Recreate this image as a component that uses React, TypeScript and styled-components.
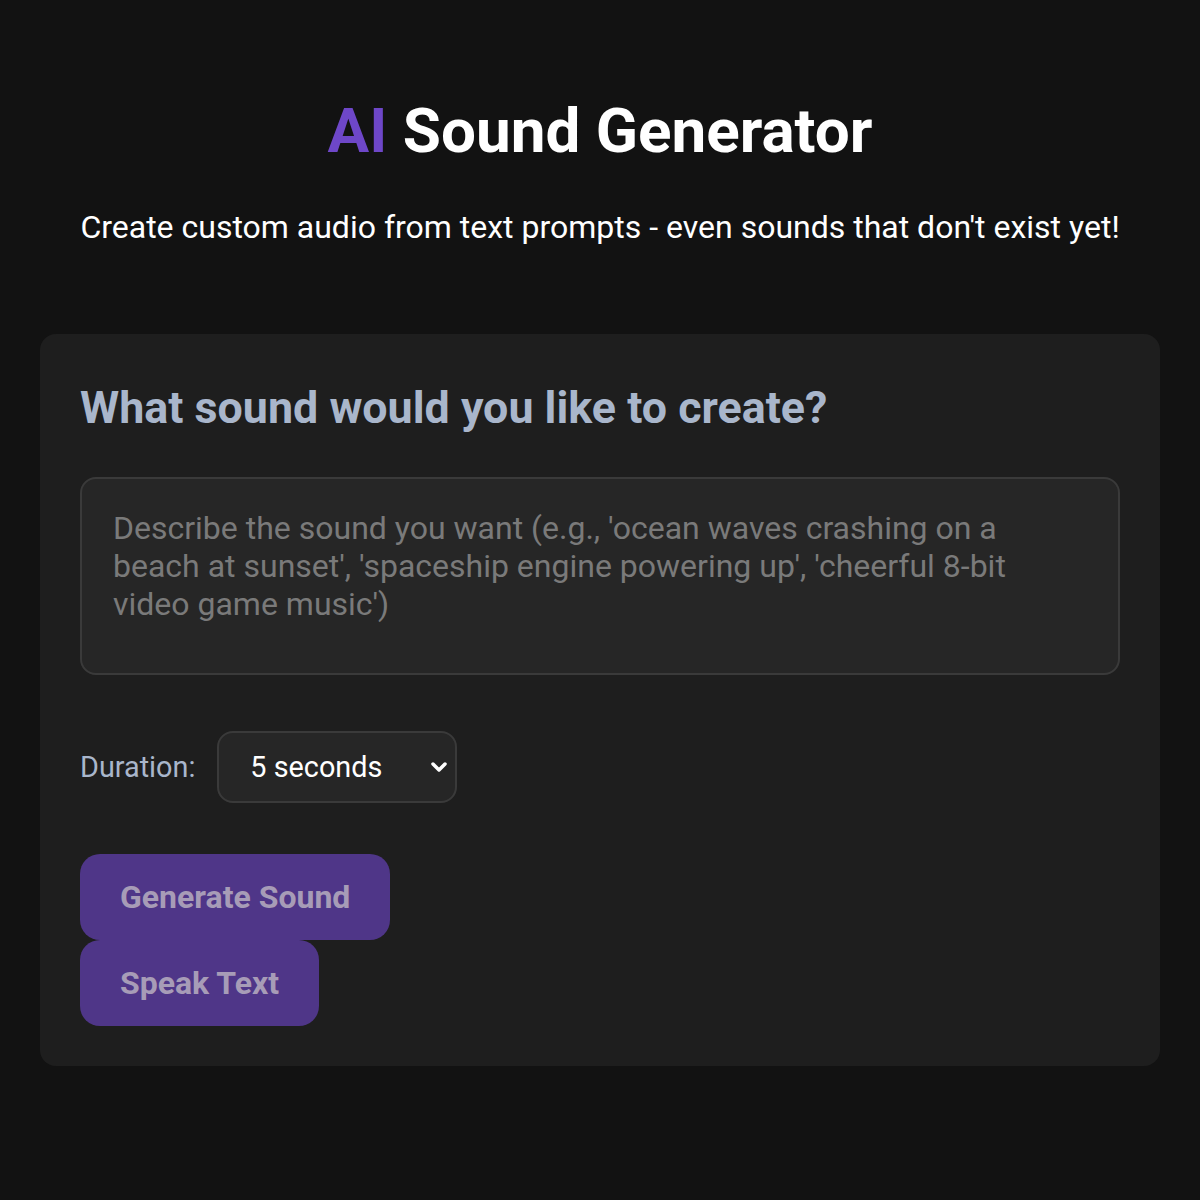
import {FC} from 'react'
import styled, {createGlobalStyle} from 'styled-components'

const GlobalStyle = createGlobalStyle`
  html, body {
    margin: 0;
    padding: 0;
    background: #121212;
    color: #ffffff;
    font-family: Roboto, 'Liberation Sans', Arial, sans-serif;
  }
`

const Page = styled.div`
  min-height: 1200px;
  padding: 0 40px;
  box-sizing: border-box;
`

const Header = styled.header`
  display: flex;
  flex-direction: column;
  align-items: center;
  padding-top: 96px;
`

const Title = styled.h1`
  margin: 0;
  font-size: 62px;
  line-height: 70px;
  font-weight: 700;
  color: #ffffff;
`

const Accent = styled.span`
  color: #6e47c8;
`

const Subtitle = styled.p`
  margin: 39px 0 0;
  font-size: 32px;
  line-height: 44px;
  color: #ffffff;
`

const Card = styled.section`
  margin-top: 85px;
  background: #1e1e1e;
  border-radius: 16px;
  padding: 40px;
  display: flex;
  flex-direction: column;
`

const CardTitle = styled.h2`
  margin: 7px 0 0;
  font-size: 44.8px;
  line-height: 54px;
  font-weight: 700;
  color: #a9b6cb;
`

const Prompt = styled.textarea`
  margin-top: 42px;
  height: 198px;
  box-sizing: border-box;
  padding: 30px 31px;
  background: #262626;
  border: 2px solid #3a3a3a;
  border-radius: 16px;
  color: #ffffff;
  font-family: inherit;
  font-size: 32px;
  line-height: 38px;
  resize: none;
  outline: none;

  &::placeholder {
    color: #7a7a7a;
  }
`

const Row = styled.div`
  display: flex;
  align-items: center;
  gap: 22px;
  margin-top: 56px;
`

const Label = styled.label`
  font-size: 28.8px;
  color: #a9b6cb;
`

const SelectWrap = styled.div`
  position: relative;
  display: flex;
`

const Select = styled.select`
  appearance: none;
  width: 240px;
  height: 72px;
  padding: 0 31px;
  background: #262626;
  border: 2px solid #3a3a3a;
  border-radius: 16px;
  color: #ffffff;
  font-family: inherit;
  font-size: 28.8px;
  outline: none;
`

const Chevron = styled.svg`
  position: absolute;
  right: 8px;
  top: 50%;
  transform: translateY(-50%);
  pointer-events: none;
`

const Actions = styled.div`
  display: flex;
  flex-direction: column;
  align-items: flex-start;
  margin-top: 51px;
`

const Button = styled.button`
  height: 86px;
  padding: 0 40px;
  border: none;
  border-radius: 20px;
  background: #4f3688;
  color: #a79cb7;
  font-family: inherit;
  font-size: 32px;
  font-weight: 700;
  cursor: not-allowed;
`

const App: FC = () => (
  <>
    <GlobalStyle />
    <Page>
      <Header>
        <Title>
          <Accent>AI</Accent> Sound Generator
        </Title>
        <Subtitle>
          Create custom audio from text prompts - even sounds that don't exist yet!
        </Subtitle>
      </Header>
      <Card>
        <CardTitle>What sound would you like to create?</CardTitle>
        <Prompt placeholder="Describe the sound you want (e.g., 'ocean waves crashing on a beach at sunset', 'spaceship engine powering up', 'cheerful 8-bit video game music')" />
        <Row>
          <Label htmlFor="duration">Duration:</Label>
          <SelectWrap>
            <Select id="duration" defaultValue="5">
              <option value="3">3 seconds</option>
              <option value="5">5 seconds</option>
              <option value="10">10 seconds</option>
            </Select>
            <Chevron width="20" height="14" viewBox="0 0 20 14">
              <path d="M4 4 L10 10 L16 4" fill="none" stroke="#ffffff" strokeWidth="3.5" strokeLinecap="round" strokeLinejoin="round" />
            </Chevron>
          </SelectWrap>
        </Row>
        <Actions>
          <Button disabled>Generate Sound</Button>
          <Button disabled>Speak Text</Button>
        </Actions>
      </Card>
    </Page>
  </>
)

export default App
